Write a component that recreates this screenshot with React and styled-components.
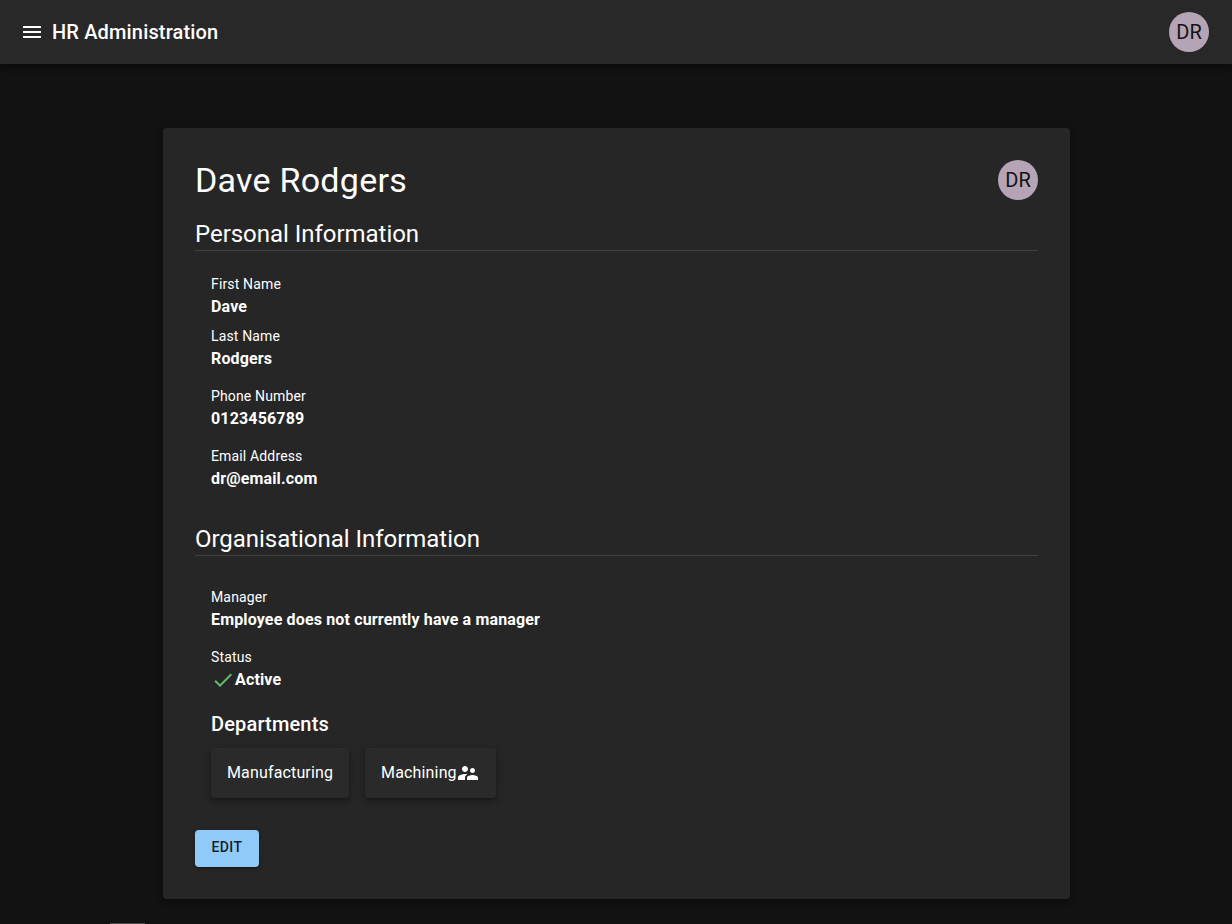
import styled, { createGlobalStyle } from 'styled-components';

const GlobalStyle = createGlobalStyle`
  html, body {
    margin: 0;
    padding: 0;
    background-color: #121212;
  }
  body {
    color: #ffffff;
    font-family: Roboto, "Liberation Sans", sans-serif;
    font-size: 16px;
    letter-spacing: 0.15px;
  }
  * {
    box-sizing: border-box;
  }
`;

const Page = styled.div`
  height: 924px;
  overflow: hidden;
  background-color: #121212;
`;

const AppBar = styled.header`
  height: 64px;
  display: flex;
  align-items: center;
  justify-content: space-between;
  padding: 0 23px 0 20px;
  background-color: #282828;
  box-shadow: 0 2px 4px -1px rgba(0, 0, 0, 0.2), 0 4px 5px 0 rgba(0, 0, 0, 0.14),
    0 1px 10px 0 rgba(0, 0, 0, 0.12);
`;

const Brand = styled.div`
  display: flex;
  align-items: center;
  gap: 8px;
`;

const BrandTitle = styled.h1`
  margin: 0;
  font-size: 20px;
  font-weight: 500;
  line-height: 32px;
`;

const MenuIcon = styled.svg`
  width: 24px;
  height: 24px;
  fill: #ffffff;
  display: block;
`;

const Avatar = styled.div`
  width: 40px;
  height: 40px;
  flex: none;
  border-radius: 50%;
  display: flex;
  align-items: center;
  justify-content: center;
  background-color: #b5a4b5;
  color: #121212;
  font-size: 20px;
  letter-spacing: 0;
  line-height: 1;
`;

const Main = styled.main`
  padding: 64px 162px 24px 163px;
`;

const Card = styled.section`
  padding: 32px;
  border-radius: 4px;
  background-color: #262626;
  box-shadow: 0 3px 3px -2px rgba(0, 0, 0, 0.2), 0 3px 4px 0 rgba(0, 0, 0, 0.14),
    0 1px 8px 0 rgba(0, 0, 0, 0.12);
`;

const CardHead = styled.div`
  display: flex;
  justify-content: space-between;
  align-items: flex-start;
  height: 42px;
  margin-bottom: 16px;
`;

const Name = styled.h2`
  margin: 0;
  font-size: 34px;
  font-weight: 400;
  letter-spacing: 0.25px;
  line-height: 40px;
`;

const SectionTitle = styled.h3`
  margin: ${({ $top }) => $top || 0}px 0 0;
  height: 33px;
  font-size: 24px;
  font-weight: 400;
  letter-spacing: -0.03px;
  line-height: 32px;
  border-bottom: 1px solid rgba(255, 255, 255, 0.12);
`;

const Fields = styled.div`
  display: flex;
  flex-direction: column;
  padding: ${({ $top }) => $top}px 16px 0;
`;

const Field = styled.div`
  margin-top: ${({ $gap }) => $gap || 0}px;
`;

const Label = styled.div`
  font-size: 14px;
  line-height: 20px;
`;

const Value = styled.div`
  display: flex;
  align-items: center;
  margin-bottom: -1px;
  padding-top: 1px;
  font-size: 16px;
  font-weight: 700;
  line-height: 24px;
`;

const CheckIcon = styled.svg`
  width: 24px;
  height: 24px;
  fill: #66bb6a;
  display: block;
`;

const Subheading = styled.h4`
  margin: 17px 0 8px;
  font-size: 20px;
  font-weight: 500;
  line-height: 32px;
`;

const Departments = styled.div`
  display: flex;
  gap: 16px;
`;

const Department = styled.div`
  display: flex;
  align-items: center;
  height: 50px;
  padding: 0 16px;
  border-radius: 4px;
  background-color: #2a2a2a;
  font-size: 16px;
  line-height: 24px;
  box-shadow: 0 2px 4px -1px rgba(0, 0, 0, 0.2), 0 4px 5px 0 rgba(0, 0, 0, 0.14),
    0 1px 10px 0 rgba(0, 0, 0, 0.12);
`;

const SupervisorIcon = styled.svg`
  width: 24px;
  height: 24px;
  margin-left: -1px;
  fill: #ffffff;
  display: block;
`;

const EditButton = styled.button`
  display: block;
  width: 64px;
  height: 37px;
  margin-top: 32px;
  padding: 0 0 4px;
  border: 0;
  border-radius: 4px;
  background-color: #90caf9;
  color: rgba(0, 0, 0, 0.87);
  font-family: inherit;
  font-size: 14px;
  font-weight: 500;
  letter-spacing: 0.4px;
  line-height: 24px;
  text-transform: uppercase;
  box-shadow: 0 3px 1px -2px rgba(0, 0, 0, 0.2), 0 2px 2px 0 rgba(0, 0, 0, 0.14),
    0 1px 5px 0 rgba(0, 0, 0, 0.12);
`;

const BelowFold = styled.div`
  width: 35px;
  height: 1px;
  margin-left: 110px;
  background-color: #4a4a4a;
`;

export default function App() {
  return (
    <>
      <GlobalStyle />
      <Page>
        <AppBar>
          <Brand>
            <MenuIcon viewBox="0 0 24 24">
              <path d="M3 18h18v-2H3v2zm0-5h18v-2H3v2zm0-7v2h18V6H3z" />
            </MenuIcon>
            <BrandTitle>HR Administration</BrandTitle>
          </Brand>
          <Avatar>DR</Avatar>
        </AppBar>
        <Main>
          <Card>
            <CardHead>
              <Name>Dave Rodgers</Name>
              <Avatar>DR</Avatar>
            </CardHead>
            <SectionTitle>Personal Information</SectionTitle>
            <Fields $top={23}>
              <Field>
                <Label>First Name</Label>
                <Value>Dave</Value>
              </Field>
              <Field $gap={8}>
                <Label>Last Name</Label>
                <Value>Rodgers</Value>
              </Field>
              <Field $gap={16}>
                <Label>Phone Number</Label>
                <Value>0123456789</Value>
              </Field>
              <Field $gap={16}>
                <Label>Email Address</Label>
                <Value>dr@email.com</Value>
              </Field>
            </Fields>
            <SectionTitle $top={33}>Organisational Information</SectionTitle>
            <Fields $top={31}>
              <Field>
                <Label>Manager</Label>
                <Value>Employee does not currently have a manager</Value>
              </Field>
              <Field $gap={16}>
                <Label>Status</Label>
                <Value>
                  <CheckIcon viewBox="0 0 24 24">
                    <path d="M9 16.17 4.83 12l-1.42 1.41L9 19 21 7l-1.41-1.41z" />
                  </CheckIcon>
                  Active
                </Value>
              </Field>
              <Subheading>Departments</Subheading>
              <Departments>
                <Department>Manufacturing</Department>
                <Department>
                  Machining
                  <SupervisorIcon viewBox="0 0 24 24">
                    <path d="M16.5 12c1.38 0 2.49-1.12 2.49-2.5S17.88 7 16.5 7C15.12 7 14 8.12 14 9.5s1.12 2.5 2.5 2.5zM9 11c1.66 0 2.99-1.34 2.99-3S10.66 5 9 5C7.34 5 6 6.34 6 8s1.34 3 3 3zm7.5 3c-1.83 0-5.5.92-5.5 2.75V19h11v-2.25c0-1.83-3.67-2.75-5.5-2.75zM9 13c-2.33 0-7 1.17-7 3.5V19h7v-2.25c0-.85.33-2.34 2.37-3.47C10.5 13.1 9.66 13 9 13z" />
                  </SupervisorIcon>
                </Department>
              </Departments>
            </Fields>
            <EditButton>Edit</EditButton>
          </Card>
        </Main>
        <BelowFold />
      </Page>
    </>
  );
}
